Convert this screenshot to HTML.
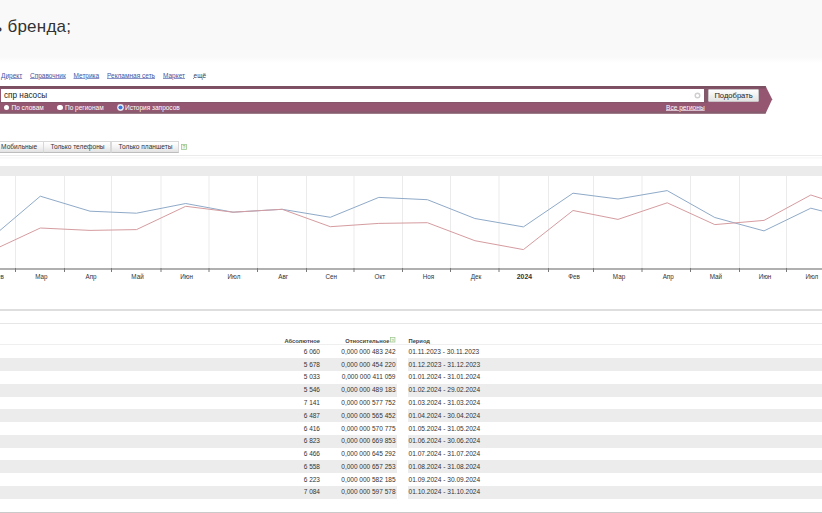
<!DOCTYPE html>
<html><head><meta charset="utf-8">
<style>
*{margin:0;padding:0;box-sizing:border-box}
html,body{width:822px;height:513px;overflow:hidden;background:#fff;font-family:"Liberation Sans",sans-serif;position:relative}
.a{position:absolute;white-space:nowrap}
#top{left:0;top:0;width:822px;height:63px;background:linear-gradient(#f9f9f9 0,#f9f9f9 57px,#fdfdfd 61px,#fff 63px)}
#h{left:-6.7px;top:16.6px;font-size:17px;letter-spacing:0.25px;color:#333;line-height:20px}
.nav{top:72.3px;font-size:6.5px;line-height:8px;color:#4a549c;text-decoration:underline;text-decoration-color:#8d95c8;text-decoration-thickness:0.9px;text-underline-offset:0.3px}
#band{left:0;top:86.4px;width:773px;height:28px}
#inp{left:1px;top:88.9px;width:703px;height:12.7px;background:#fff}
#q{left:4px;top:90.4px;font-size:8.2px;line-height:11px;color:#222}
#btn{left:708px;top:89px;width:51px;height:13px;background:linear-gradient(#fdfdfd,#e3e3e3);border:1px solid #c9c3c6;border-radius:1px}
#btn span{position:absolute;left:0;right:0;top:1px;text-align:center;font-size:7.6px;line-height:10px;color:#222}
.rad{top:104.5px;width:5.6px;height:5.6px;border-radius:50%;background:#fff}
.rl{top:104px;font-size:6.5px;line-height:8px;color:#fff}
#allreg{left:666px;top:103.6px;font-size:6.6px;line-height:8px;color:#fff;text-decoration:underline;text-decoration-color:#d9bfcb;text-decoration-thickness:0.8px;text-underline-offset:0.3px}
.tab{top:141px;height:12px;background:linear-gradient(#fff 0%,#f4f4f4 50%,#e2e2e2 100%);border:1px solid #d8d8d8;border-bottom-color:#bdbdbd}
.tab span{position:absolute;top:1px;font-size:6.6px;line-height:8px;color:#333}
#tabline{left:0;top:154.6px;width:822px;height:1px;background:#ebebeb;box-shadow:0 2.4px 0 #f5f5f5}
#gbar{left:0;top:165.5px;width:822px;height:10.5px;background:#ebebeb}
#chart{left:0;top:176px}
.ml{top:273.2px;font-size:6.3px;line-height:8px;color:#333;text-align:center;width:40px}
#cbot{left:0;top:309px;width:822px;height:2px;background:#dedede}
#l2{left:0;top:323px;width:822px;height:1px;background:#e6e6e6}
#l3{left:0;top:344.4px;width:822px;height:1px;background:#efefef}
.row{left:0;width:822px;height:12.75px}
.g{background:#ececec}
.gap{left:396.5px;width:11px;height:12.75px;background:#fff}
.c1,.c2,.c3,.hd{font-size:6.5px;line-height:12.75px;color:#333}
.c1,.c2,.c3{margin-top:0.4px}
.c1{left:250px;width:70px;text-align:right}
.c2{left:320px;width:75.5px;text-align:right}
.c3{left:408.5px;font-size:6.58px}
.hd{top:336px;line-height:10px;color:#444;font-weight:bold;font-size:5.75px}
#bot{left:0;top:511.6px;width:822px;height:1.4px;background:#cacaca}
</style></head><body>
<div class="a" id="top"></div>
<div class="a" id="h">ь бренда;</div>

<div class="a nav" style="left:1px">Директ</div>
<div class="a nav" style="left:30px">Справочник</div>
<div class="a nav" style="left:73.5px">Метрика</div>
<div class="a nav" style="left:107px">Рекламная сеть</div>
<div class="a nav" style="left:163px">Маркет</div>
<div class="a nav" style="left:193.6px;color:#3c3c48;text-decoration-style:dotted;text-decoration-color:#8a8aa8">ещё</div>

<svg class="a" id="band" width="773" height="28" viewBox="0 0 773 28">
  <polygon points="0,0 765.6,0 772.2,13.3 765.6,27.6 0,27.6" fill="#955672"/>
  <rect x="0" y="0" width="765.6" height="2.6" fill="#7c5063"/>
  <rect x="0" y="15.2" width="707.5" height="1.4" fill="#7d5566"/>
  <rect x="704" y="2" width="3.5" height="14" fill="#84586b"/>
  <rect x="0" y="25.6" width="765.6" height="2" fill="#845c6d"/>
</svg>
<div class="a" id="inp"></div>
<div class="a" id="q">спр насосы</div>
<svg class="a" style="left:694.2px;top:91.5px" width="7" height="7" viewBox="0 0 7 7"><circle cx="3.5" cy="3.5" r="2.3" fill="none" stroke="#cfcfcf" stroke-width="1.4"/></svg>
<div class="a" id="btn"><span>Подобрать</span></div>

<div class="a rad" style="left:3.6px"></div>
<div class="a rl" style="left:11.5px">По словам</div>
<div class="a rad" style="left:57.3px"></div>
<div class="a rl" style="left:65px">По регионам</div>
<svg class="a" style="left:116.6px;top:104px" width="7" height="7" viewBox="0 0 7 7"><circle cx="3.5" cy="3.5" r="3.4" fill="#d9d4e0"/><circle cx="3.5" cy="3.5" r="2.8" fill="#fff"/><circle cx="3.5" cy="3.5" r="2.1" fill="#3a78e0"/></svg>
<div class="a rl" style="left:125px">История запросов</div>
<div class="a" id="allreg">Все регионы</div>

<div class="a tab" style="left:-2px;width:45.8px"><span style="left:2.1px">Мобильные</span></div>
<div class="a tab" style="left:43.4px;width:68px"><span style="left:6px">Только телефоны</span></div>
<div class="a tab" style="left:111px;width:68px"><span style="left:6.5px">Только планшеты</span></div>
<svg class="a" style="left:181px;top:144px" width="6" height="6" viewBox="0 0 6 6"><rect x="0.5" y="0.5" width="5" height="5" fill="#f1f8ee" stroke="#9cc78e" stroke-width="0.8"/><text x="3" y="5" font-size="4.5" text-anchor="middle" fill="#7fae70" font-family="Liberation Sans">?</text></svg>
<div class="a" id="tabline"></div>

<div class="a" id="gbar"></div>
<svg class="a" id="chart" width="822" height="100" viewBox="0 176 822 100">
  <g stroke="#ebebeb" stroke-width="1">
    <line x1="15.5" y1="176" x2="15.5" y2="269"/>
    <line x1="64.5" y1="176" x2="64.5" y2="269"/>
    <line x1="111.5" y1="176" x2="111.5" y2="269"/>
    <line x1="161" y1="176" x2="161" y2="269"/>
    <line x1="209" y1="176" x2="209" y2="269"/>
    <line x1="257.5" y1="176" x2="257.5" y2="269"/>
    <line x1="306.5" y1="176" x2="306.5" y2="269"/>
    <line x1="354" y1="176" x2="354" y2="269"/>
    <line x1="402.5" y1="176" x2="402.5" y2="269"/>
    <line x1="450.5" y1="176" x2="450.5" y2="269"/>
    <line x1="499" y1="176" x2="499" y2="269"/>
    <line x1="548.5" y1="176" x2="548.5" y2="269"/>
    <line x1="593.5" y1="176" x2="593.5" y2="269"/>
    <line x1="642" y1="176" x2="642" y2="269"/>
    <line x1="690.5" y1="176" x2="690.5" y2="269"/>
    <line x1="739.5" y1="176" x2="739.5" y2="269"/>
    <line x1="786.5" y1="176" x2="786.5" y2="269"/>
  </g>
  <polyline fill="none" stroke="#8faac8" stroke-width="1" points="0,230.4 40.3,196.2 90,211.2 136.5,213.2 185.7,203.5 233,212.2 282.2,209.3 330.3,217.3 378.8,197.4 427.4,199.7 474.9,218.5 523.4,226.9 573,193.2 618,199 667.2,190.6 714.8,217.5 764,230.9 810.8,208.2 822,211"/>
  <polyline fill="none" stroke="#d59ca0" stroke-width="1" points="0,246.8 40.3,228 90,230.4 136.5,229.6 185.7,206.3 233,212.2 282.2,209.3 330.3,226.7 378.8,223.4 427.4,222.7 474.9,240.7 523.4,249.6 573,210.5 618,219.4 667.2,202.8 714.8,224.6 764,220.4 810.8,195 822,198.6"/>
  <rect x="0" y="268" width="822" height="2" fill="#b0b0b0"/>
  <g stroke="#7a7a7a" stroke-width="1">
    <line x1="15.5" y1="268" x2="15.5" y2="272"/>
    <line x1="64.5" y1="268" x2="64.5" y2="272"/>
    <line x1="111.5" y1="268" x2="111.5" y2="272"/>
    <line x1="161" y1="268" x2="161" y2="272"/>
    <line x1="209" y1="268" x2="209" y2="272"/>
    <line x1="257.5" y1="268" x2="257.5" y2="272"/>
    <line x1="306.5" y1="268" x2="306.5" y2="272"/>
    <line x1="354" y1="268" x2="354" y2="272"/>
    <line x1="402.5" y1="268" x2="402.5" y2="272"/>
    <line x1="450.5" y1="268" x2="450.5" y2="272"/>
    <line x1="499" y1="268" x2="499" y2="272"/>
    <line x1="548.5" y1="268" x2="548.5" y2="272"/>
    <line x1="593.5" y1="268" x2="593.5" y2="272"/>
    <line x1="642" y1="268" x2="642" y2="272"/>
    <line x1="690.5" y1="268" x2="690.5" y2="272"/>
    <line x1="739.5" y1="268" x2="739.5" y2="272"/>
    <line x1="786.5" y1="268" x2="786.5" y2="272"/>
  </g>
</svg>
<div class="a ml" style="left:-22.0px">Фев</div>
<div class="a ml" style="left:21.3px">Мар</div>
<div class="a ml" style="left:71.0px">Апр</div>
<div class="a ml" style="left:117.5px">Май</div>
<div class="a ml" style="left:166.7px">Июн</div>
<div class="a ml" style="left:214.0px">Июл</div>
<div class="a ml" style="left:263.2px">Авг</div>
<div class="a ml" style="left:311.3px">Сен</div>
<div class="a ml" style="left:359.8px">Окт</div>
<div class="a ml" style="left:408.4px">Ноя</div>
<div class="a ml" style="left:455.9px">Дек</div>
<div class="a ml" style="left:504.4px;font-weight:bold;font-size:6.8px;top:272.8px">2024</div>
<div class="a ml" style="left:554.0px">Фев</div>
<div class="a ml" style="left:599.0px">Мар</div>
<div class="a ml" style="left:648.2px">Апр</div>
<div class="a ml" style="left:695.8px">Май</div>
<div class="a ml" style="left:745.0px">Июн</div>
<div class="a ml" style="left:791.8px">Июл</div>
<div class="a" id="cbot"></div>
<div class="a" id="l2"></div>
<div class="a" id="l3"></div>

<div class="a hd" style="left:250px;width:70px;text-align:right">Абсолютное</div>
<div class="a hd" style="left:320px;width:69.5px;text-align:right">Относительное</div>
<svg class="a" style="left:390.2px;top:337px" width="5.4" height="5.6" viewBox="0 0 6 6"><rect x="0.5" y="0.5" width="5" height="5" fill="#f1f8ee" stroke="#9cc78e" stroke-width="0.8"/><text x="3" y="5" font-size="4.5" text-anchor="middle" fill="#7fae70" font-family="Liberation Sans">?</text></svg>
<div class="a hd" style="left:408.5px">Период</div>

<div id="rows">
<div class="a c1" style="top:345.50px">6 060</div><div class="a c2" style="top:345.50px">0,000 000 483 242</div><div class="a c3" style="top:345.50px">01.11.2023 - 30.11.2023</div>
<div class="a row g" style="top:358.27px"></div><div class="a gap" style="top:358.27px"></div>
<div class="a c1" style="top:358.27px">5 678</div><div class="a c2" style="top:358.27px">0,000 000 454 220</div><div class="a c3" style="top:358.27px">01.12.2023 - 31.12.2023</div>
<div class="a c1" style="top:371.04px">5 033</div><div class="a c2" style="top:371.04px">0,000 000 411 059</div><div class="a c3" style="top:371.04px">01.01.2024 - 31.01.2024</div>
<div class="a row g" style="top:383.81px"></div><div class="a gap" style="top:383.81px"></div>
<div class="a c1" style="top:383.81px">5 546</div><div class="a c2" style="top:383.81px">0,000 000 489 183</div><div class="a c3" style="top:383.81px">01.02.2024 - 29.02.2024</div>
<div class="a c1" style="top:396.58px">7 141</div><div class="a c2" style="top:396.58px">0,000 000 577 752</div><div class="a c3" style="top:396.58px">01.03.2024 - 31.03.2024</div>
<div class="a row g" style="top:409.35px"></div><div class="a gap" style="top:409.35px"></div>
<div class="a c1" style="top:409.35px">6 487</div><div class="a c2" style="top:409.35px">0,000 000 565 452</div><div class="a c3" style="top:409.35px">01.04.2024 - 30.04.2024</div>
<div class="a c1" style="top:422.12px">6 416</div><div class="a c2" style="top:422.12px">0,000 000 570 775</div><div class="a c3" style="top:422.12px">01.05.2024 - 31.05.2024</div>
<div class="a row g" style="top:434.89px"></div><div class="a gap" style="top:434.89px"></div>
<div class="a c1" style="top:434.89px">6 823</div><div class="a c2" style="top:434.89px">0,000 000 669 853</div><div class="a c3" style="top:434.89px">01.06.2024 - 30.06.2024</div>
<div class="a c1" style="top:447.66px">6 466</div><div class="a c2" style="top:447.66px">0,000 000 645 292</div><div class="a c3" style="top:447.66px">01.07.2024 - 31.07.2024</div>
<div class="a row g" style="top:460.43px"></div><div class="a gap" style="top:460.43px"></div>
<div class="a c1" style="top:460.43px">6 558</div><div class="a c2" style="top:460.43px">0,000 000 657 253</div><div class="a c3" style="top:460.43px">01.08.2024 - 31.08.2024</div>
<div class="a c1" style="top:473.20px">6 223</div><div class="a c2" style="top:473.20px">0,000 000 582 185</div><div class="a c3" style="top:473.20px">01.09.2024 - 30.09.2024</div>
<div class="a row g" style="top:485.97px"></div><div class="a gap" style="top:485.97px"></div>
<div class="a c1" style="top:485.97px">7 084</div><div class="a c2" style="top:485.97px">0,000 000 597 578</div><div class="a c3" style="top:485.97px">01.10.2024 - 31.10.2024</div>
</div>
<div class="a" id="bot"></div>
</body></html>
